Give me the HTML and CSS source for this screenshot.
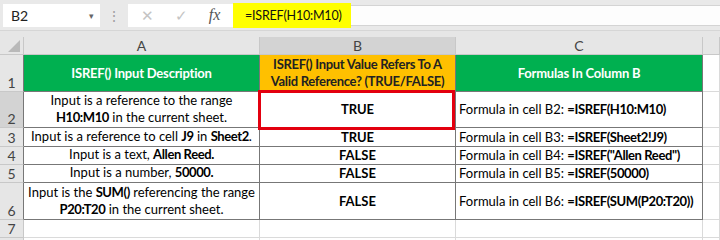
FILE: index.html
```html
<!DOCTYPE html>
<html lang="en">
<head>
<meta charset="UTF-8" />
<title>ISREF example</title>
<link rel="stylesheet" href="styles.css">
</head>
<body>

<!-- FORMULA BAR -->
<div class="formula-bar">
  <div class="name-box">
    <span>B2</span>
    <span class="caret">▾</span>
  </div>
  <div class="dots">⋮</div>
  <div class="fx-box">
    <span class="ico">✕</span>
    <span class="ico">✓</span>
    <span class="fx">fx</span>
  </div>
  <div class="formula-input">
    <span class="hl">=ISREF(H10:M10)</span>
  </div>
</div>

<!-- PLANILHA -->
<div class="sheet">
  <div class="hd corner"><span class="tri"></span></div>
  <div class="hd col">A</div>
  <div class="hd col sel">B</div>
  <div class="hd col">C</div>
  <div class="hd col"></div>

  <div class="rh dk">1</div>
  <div class="d green"><span>ISREF() Input Description</span></div>
  <div class="d orange"><span>ISREF() Input Value Refers To A<br>Valid Reference? (TRUE/FALSE)</span></div>
  <div class="d green"><span>Formulas In Column B</span></div>
  <div class="g"></div>

  <div class="rh dk sel">2</div>
  <div class="d desc"><span>Input is a reference to the range<br><b>H10:M10</b> in the current sheet.</span></div>
  <div class="d val"><span>TRUE</span></div>
  <div class="d frm"><span>Formula in cell B2: <b>=ISREF(H10:M10)</b></span></div>
  <div class="g"></div>

  <div class="rh dk">3</div>
  <div class="d desc"><span>Input is a reference to cell <b>J9</b> in <b>Sheet2</b>.</span></div>
  <div class="d val"><span>TRUE</span></div>
  <div class="d frm"><span>Formula in cell B3: <b>=ISREF(Sheet2!J9)</b></span></div>
  <div class="g"></div>

  <div class="rh dk">4</div>
  <div class="d desc"><span>Input is a text, <b>Allen Reed.</b></span></div>
  <div class="d val"><span>FALSE</span></div>
  <div class="d frm"><span>Formula in cell B4: <b>=ISREF("Allen Reed")</b></span></div>
  <div class="g"></div>

  <div class="rh dk">5</div>
  <div class="d desc"><span>Input is a number, <b>50000.</b></span></div>
  <div class="d val"><span>FALSE</span></div>
  <div class="d frm"><span>Formula in cell B5: <b>=ISREF(50000)</b></span></div>
  <div class="g"></div>

  <div class="rh dk">6</div>
  <div class="d desc"><span>Input is the <b>SUM()</b> referencing the range<br><b>P20:T20</b> in the current sheet.</span></div>
  <div class="d val"><span>FALSE</span></div>
  <div class="d frm"><span>Formula in cell B6: <b>=ISREF(SUM(P20:T20))</b></span></div>
  <div class="g"></div>

  <div class="rh">7</div>
  <div class="g"></div>
  <div class="g"></div>
  <div class="g"></div>
  <div class="g"></div>

  <div class="rh"></div>
  <div class="g"></div>
  <div class="g"></div>
  <div class="g"></div>
  <div class="g"></div>

  <div class="marca"></div>
</div>

</body>
</html>
```

FILE: styles.css
```css
/* BASE */
* {
  box-sizing: border-box;
}
body {
  margin: 0;
  width: 720px;
  height: 240px;
  overflow: hidden;
  background: #e6e6e6;
  font-family: Lato, "Liberation Sans", sans-serif;
  color: #000;
}

/* BARRA DE FÓRMULA */
.formula-bar {
  display: flex;
  align-items: center;
  height: 31px;
  padding: 0 0 0 3px;
  background: #e9e9e9;
  border-bottom: 1px solid #d6d6d6;
}
.name-box {
  display: flex;
  align-items: center;
  justify-content: space-between;
  width: 97px;
  height: 23px;
  background: #fff;
  padding: 0 6px 0 8px;
  font-size: 14px;
  color: #222;
}
.caret {
  font-size: 9px;
  color: #666;
}
.dots {
  width: 28px;
  text-align: center;
  color: #a0a0a0;
  font-size: 14px;
}
.fx-box {
  display: flex;
  align-items: center;
  justify-content: space-around;
  width: 105px;
  height: 23px;
  background: #fff;
  padding: 0 2px;
}
.ico {
  color: #c4c4c4;
  font-size: 15px;
}
.fx {
  font-family: "Liberation Serif", serif;
  font-style: italic;
  font-size: 16px;
  color: #555;
}
.formula-input {
  flex: 1;
  display: flex;
  align-items: center;
  height: 21px;
  background: #fdfdfd;
  border-top: 1px solid #d4d4d4;
  border-bottom: 1px solid #d4d4d4;
}
.hl {
  display: flex;
  align-items: center;
  height: 25px;
  padding: 0 0 0 12px;
  width: 118px;
  background: #ffff00;
  font-size: 12.5px;
  letter-spacing: -0.2px;
  color: #111;
}

/* PLANILHA */
.sheet {
  position: relative;
  display: grid;
  grid-template-columns: 24px 236px 196px 247px 17px;
  grid-template-rows: 18px 37px 36px 19px 18px 18px 37px 18px 3px;
  margin-top: 6px;
  background: #fff;
  font-size: 13px;
}
.sheet > div {
  border-right: 1px solid #dadada;
  border-bottom: 1px solid #dadada;
}
.hd {
  background: #e6e6e6;
  color: #444;
  font-size: 14px;
  text-align: center;
  line-height: 17px;
  border-color: #c8c8c8 !important;
}
.hd.sel {
  background: #d3d3d3;
}
.corner {
  position: relative;
}
.tri {
  position: absolute;
  right: 3px;
  bottom: 2px;
  width: 0;
  height: 0;
  border-left: 12px solid transparent;
  border-bottom: 12px solid #b9b9b9;
}
.rh {
  display: flex;
  align-items: flex-end;
  justify-content: center;
  background: #e6e6e6;
  color: #444;
  font-size: 14px;
  line-height: 17px;
  border-right-color: #c8c8c8 !important;
  border-bottom-color: #c8c8c8 !important;
}
.rh.dk {
  border-right-color: #777 !important;
}
.rh.sel {
  background: #d3d3d3;
}

/* CÉLULAS COM DADOS */
.sheet > .d {
  display: flex;
  align-items: center;
  border-right-color: #777;
  border-bottom-color: #777;
  line-height: 17px;
}
.green {
  justify-content: center;
  background: #00b050;
  color: #fff;
  font-weight: 700;
  letter-spacing: -0.2px;
}
.orange {
  justify-content: center;
  text-align: center;
  background: #ffc000;
  color: #222;
  font-weight: 700;
  letter-spacing: -0.3px;
}
.sheet > .desc {
  align-items: flex-end;
  justify-content: center;
  text-align: center;
  padding-bottom: 1px;
}
.val {
  justify-content: center;
  font-weight: 700;
}
.frm {
  padding-left: 3px;
  white-space: nowrap;
}
b {
  font-weight: 700;
  letter-spacing: -0.4px;
}

/* DESTAQUE DA CÉLULA B2 */
.sheet > .marca {
  position: absolute;
  left: 258px;
  top: 53px;
  width: 197px;
  height: 40px;
  border: 3px solid #e3000f;
}
```
